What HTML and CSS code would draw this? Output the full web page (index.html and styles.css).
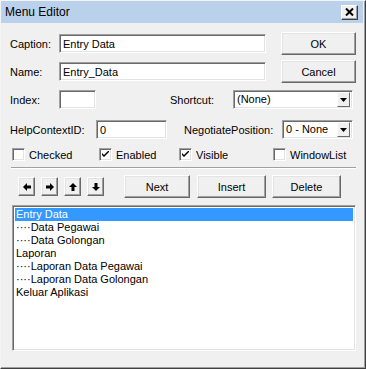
FILE: index.html
```html
<!DOCTYPE html>
<html lang="en">
<head>
    <meta charset="utf-8" />
    <title>Menu Editor</title>
    <link rel="stylesheet" href="styles.css">
</head>
<body>
    <div class="window">
        <div class="titlebar">
            <span class="title">Menu Editor</span>
            <div class="close">
                <svg width="9" height="8" viewBox="0 0 9 8"><path d="M1 0.5 L8 7.5 M8 0.5 L1 7.5" stroke="#000" stroke-width="2"/></svg>
            </div>
        </div>

        <div class="content">
            <div class="row row-big">
                <label class="lbl lbl-main">Caption:</label>
                <input class="field field-wide" value="Entry Data">
                <button class="btn btn-side">OK</button>
            </div>
            <div class="row row-big row-name">
                <label class="lbl lbl-main">Name:</label>
                <input class="field field-wide" value="Entry_Data">
                <button class="btn btn-side">Cancel</button>
            </div>

            <div class="row row-small row-index">
                <label class="lbl lbl-main">Index:</label>
                <input class="field field-index" value="">
                <label class="lbl lbl-shortcut">Shortcut:</label>
                <div class="combo combo-shortcut">
                    <span class="combo-text">(None)</span>
                    <span class="drop"><svg width="7" height="4" viewBox="0 0 7 4"><path d="M0 0 H7 L3.5 4 Z" fill="#000"/></svg></span>
                </div>
            </div>
            <div class="row row-small row-help">
                <label class="lbl lbl-help">HelpContextID:</label>
                <input class="field field-help" value="0">
                <label class="lbl lbl-negotiate">NegotiatePosition:</label>
                <div class="combo combo-negotiate">
                    <span class="combo-text">0 - None</span>
                    <span class="drop"><svg width="7" height="4" viewBox="0 0 7 4"><path d="M0 0 H7 L3.5 4 Z" fill="#000"/></svg></span>
                </div>
            </div>

            <div class="checks">
                <div class="check"><span class="box"></span>Checked</div>
                <div class="check"><span class="box checked"><svg width="7" height="7" viewBox="0 0 7 7"><path d="M0 2 L0 4 L2 6 L7 1 L7 -1 L2 4 Z" fill="#000"/></svg></span>Enabled</div>
                <div class="check"><span class="box checked"><svg width="7" height="7" viewBox="0 0 7 7"><path d="M0 2 L0 4 L2 6 L7 1 L7 -1 L2 4 Z" fill="#000"/></svg></span>Visible</div>
                <div class="check"><span class="box"></span>WindowList</div>
            </div>

            <div class="sep"></div>

            <div class="toolbar">
                <button class="btn btn-arrow"><svg width="8" height="8" viewBox="0 0 8 8"><path d="M0 4 L4 0 V2.5 H8 V5.5 H4 V8 Z" fill="#000"/></svg></button>
                <button class="btn btn-arrow"><svg width="8" height="8" viewBox="0 0 8 8"><path d="M8 4 L4 0 V2.5 H0 V5.5 H4 V8 Z" fill="#000"/></svg></button>
                <button class="btn btn-arrow"><svg width="8" height="8" viewBox="0 0 8 8"><path d="M4 0 L0 4 H2.5 V8 H5.5 V4 H8 Z" fill="#000"/></svg></button>
                <button class="btn btn-arrow"><svg width="8" height="8" viewBox="0 0 8 8"><path d="M4 8 L0 4 H2.5 V0 H5.5 V4 H8 Z" fill="#000"/></svg></button>
                <button class="btn btn-next">Next</button>
                <button class="btn btn-insert">Insert</button>
                <button class="btn btn-delete">Delete</button>
            </div>

            <div class="listbox">
                <div class="item selected">Entry Data</div>
                <div class="item">····Data Pegawai</div>
                <div class="item">····Data Golongan</div>
                <div class="item">Laporan</div>
                <div class="item">····Laporan Data Pegawai</div>
                <div class="item">····Laporan Data Golongan</div>
                <div class="item">Keluar Aplikasi</div>
            </div>
        </div>
    </div>
</body>
</html>
```

FILE: styles.css
```css
body {
    margin: 0;
    font-family: "Liberation Sans", Arial, sans-serif;
    font-size: 11px;
    color: #000;
    background-color: #f0f0f0;
}
.window {
    width: 366px;
    height: 369px;
    box-sizing: border-box;
    background-color: #f0f0f0;
    border-top: 1px solid #f4f4f4;
    border-left: 1px solid #f4f4f4;
    border-right: 1px solid #404040;
    border-bottom: 1px solid #404040;
    box-shadow: inset -1px -1px #a0a0a0;
    display: flex;
    flex-direction: column;
}
.titlebar {
    height: 22px;
    margin-right: 2px;
    background-color: #b9d1ea;
    display: flex;
    align-items: center;
    padding: 0 5px 0 4px;
}
.title {
    flex: 1;
    font-size: 12px;
}
.close {
    width: 15px;
    height: 13px;
    background-color: #f0f0f0;
    border: 1px solid;
    border-color: #fff #404040 #404040 #fff;
    box-shadow: inset -1px -1px #a0a0a0;
    display: flex;
    align-items: center;
    justify-content: center;
}
.content {
    padding: 0 0 0 9px;
    display: flex;
    flex-direction: column;
}
.row {
    display: flex;
    align-items: center;
}
.row-big {
    height: 23px;
    margin-top: 9px;
}
.row-name {
    margin-top: 5px;
}
.row-small {
    height: 19px;
}
.row-index {
    margin-top: 7px;
}
.row-help {
    margin-top: 11px;
}
.lbl {
    flex: none;
}
.lbl-main {
    width: 49px;
}
.lbl-help {
    width: 86px;
}
.lbl-shortcut {
    margin-left: 74px;
    width: 63px;
}
.lbl-negotiate {
    margin-left: 17px;
    width: 98px;
}
.field {
    box-sizing: border-box;
    height: 19px;
    margin: 0;
    padding: 0 0 0 3px;
    font-family: inherit;
    font-size: 11px;
    background-color: #fff;
    border: 1px solid;
    border-color: #a0a0a0 #fff #fff #a0a0a0;
    box-shadow: inset 1px 1px #696969, inset -1px -1px #e3e3e3;
    outline: none;
}
.field-wide {
    width: 207px;
}
.field-index {
    width: 37px;
}
.field-help {
    width: 71px;
}
.btn {
    box-sizing: border-box;
    margin: 0;
    padding: 0;
    font-family: inherit;
    font-size: 11px;
    color: #000;
    background-color: #f0f0f0;
    border: 1px solid;
    border-color: #fff #696969 #696969 #fff;
    box-shadow: inset -1px -1px #a0a0a0, inset 1px 1px #e3e3e3;
    display: flex;
    align-items: center;
    justify-content: center;
}
.btn-side {
    width: 75px;
    height: 23px;
    margin-left: 15px;
}
.combo {
    box-sizing: border-box;
    height: 19px;
    background-color: #fff;
    border: 1px solid;
    border-color: #a0a0a0 #fff #fff #a0a0a0;
    box-shadow: inset 1px 1px #696969, inset -1px -1px #e3e3e3;
    display: flex;
    padding: 1px 2px 1px 1px;
}
.combo-shortcut {
    width: 120px;
}
.combo-negotiate {
    width: 71px;
}
.combo-text {
    flex: 1;
    padding-left: 2px;
    line-height: 15px;
}
.drop {
    box-sizing: border-box;
    width: 13px;
    height: 15px;
    background-color: #f0f0f0;
    border: 1px solid;
    border-color: #fff #696969 #696969 #fff;
    display: flex;
    align-items: center;
    justify-content: center;
}
.checks {
    display: grid;
    grid-template-columns: 87px 80px 94px auto;
    margin-top: 9px;
    padding-left: 2px;
    height: 13px;
}
.check {
    display: flex;
    align-items: center;
    gap: 4px;
}
.box {
    box-sizing: border-box;
    width: 13px;
    height: 13px;
    background-color: #fff;
    border: 1px solid;
    border-color: #a0a0a0 #fff #fff #a0a0a0;
    box-shadow: inset 1px 1px #696969, inset -1px -1px #e3e3e3;
    display: flex;
    align-items: center;
    justify-content: center;
}
.sep {
    height: 1px;
    width: 345px;
    margin-top: 6px;
    margin-left: 1px;
    background-color: #a0a0a0;
    border-bottom: 1px solid #fff;
}
.toolbar {
    display: flex;
    align-items: center;
    height: 23px;
    margin-top: 6px;
    padding-left: 8px;
}
.btn-arrow {
    width: 17px;
    height: 19px;
    margin-right: 6px;
}
.btn-next {
    width: 66px;
    height: 23px;
    margin-left: 14px;
}
.btn-insert {
    width: 69px;
    height: 23px;
    margin-left: 7px;
}
.btn-delete {
    width: 69px;
    height: 23px;
    margin-left: 6px;
}
.listbox {
    box-sizing: border-box;
    width: 344px;
    height: 146px;
    margin-top: 7px;
    margin-left: 2px;
    padding: 2px;
    background-color: #fff;
    border: 1px solid;
    border-color: #a0a0a0 #fff #fff #a0a0a0;
    box-shadow: inset 1px 1px #696969, inset -1px -1px #e3e3e3;
}
.item {
    height: 13px;
    line-height: 13px;
    padding-left: 1px;
    white-space: pre;
}
.item.selected {
    background-color: #3399ff;
    color: #fff;
}
```
